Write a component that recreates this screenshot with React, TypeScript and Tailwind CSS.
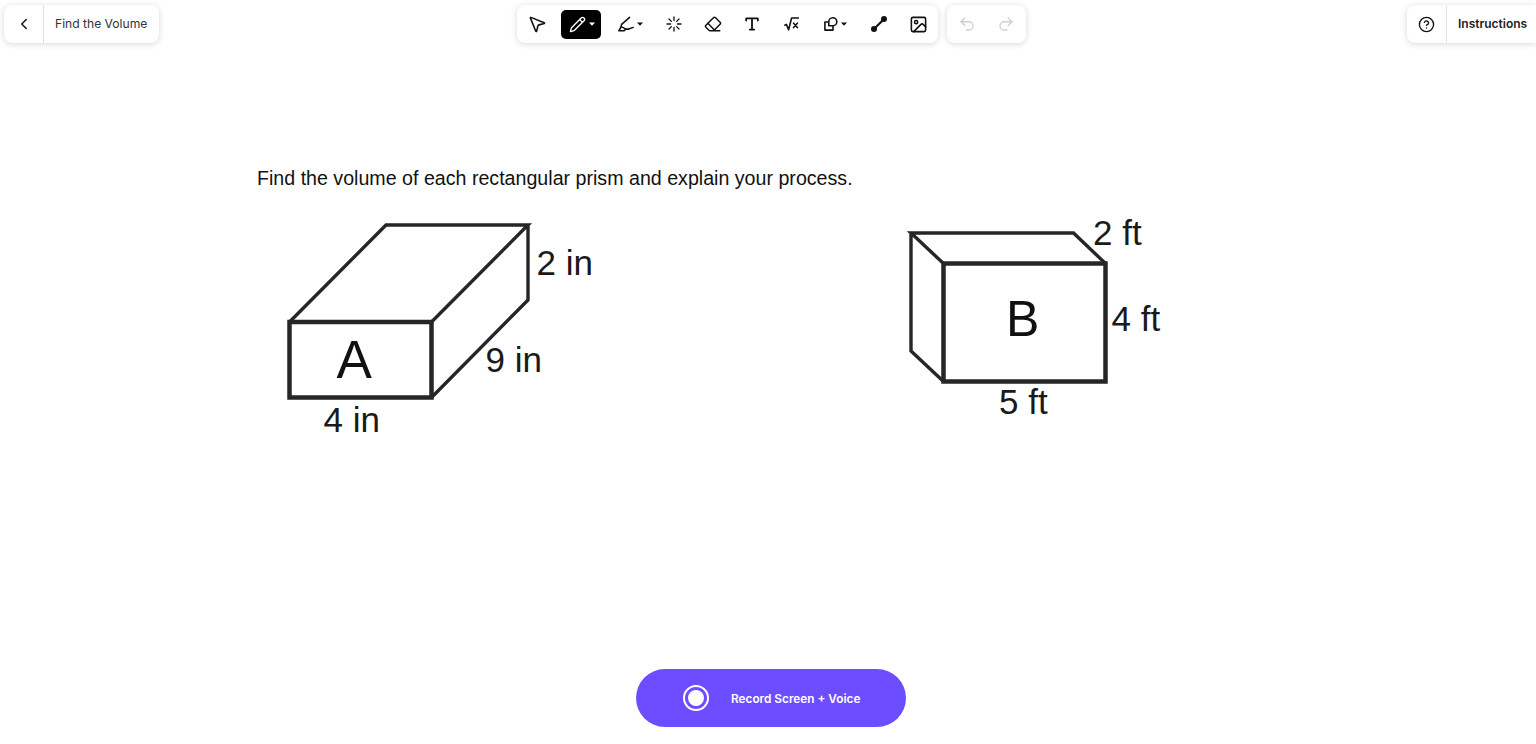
import React from "react";
import { ChevronLeft, CircleHelp, Eraser, Image as ImageIcon, MousePointer2, Pencil, Redo2, Undo2 } from "lucide-react";

const Caret = ({ white = false }: { white?: boolean }) => (
  <svg width="6" height="4" viewBox="0 0 6 4" className="ml-[3px] shrink-0">
    <path d="M0 0.5h6L3 3.8z" fill={white ? "#fff" : "#111"} />
  </svg>
);

const Highlighter = () => (
  <svg width="16" height="16" viewBox="0 0 16 16" fill="none" stroke="#111" strokeWidth="1.5" strokeLinejoin="round" strokeLinecap="round">
    <path d="M3.6 8.4 11.6 1.4" />
    <path d="M3.6 8.4 3 11 0.8 14.8H6.2L7.8 13 10 13.2" />
    <path d="M3.2 10.6 7.6 12.8" />
    <path d="M10 13.2 15.2 11.4" />
  </svg>
);

const Sparkle = () => (
  <svg width="16" height="16" viewBox="0 0 16 16" fill="none" stroke="#111" strokeWidth="1.3" strokeLinecap="round">
    <path d="M8 1v3.6M8 11.4V15M1 8h3.6M11.4 8H15M3 3l2.4 2.4M10.6 10.6 13 13M13 3l-2.4 2.4M5.4 10.6 3 13" />
  </svg>
);

const SerifT = () => (
  <svg width="14" height="14" viewBox="0 0 14 14" fill="none" stroke="#111" strokeWidth="1.8" strokeLinecap="round" strokeLinejoin="round">
    <path d="M1.2 3.6V1.4h11.6v2.2M7 1.4v11.2M4.8 12.6h4.4" />
  </svg>
);

const Sqrt = () => (
  <svg width="15" height="14" viewBox="0 0 15 14" fill="none" stroke="#111" strokeLinecap="round" strokeLinejoin="round">
    <path d="M0.8 8.2 2.4 7.4 4.6 12.8 7.6 1H14.4" strokeWidth="1.6" />
    <path d="M9.6 6.2l3.8 4.4M13.4 6.2l-3.8 4.4" strokeWidth="1.6" />
  </svg>
);

const Shapes = () => (
  <svg width="14" height="14" viewBox="0 0 14 14" fill="none" stroke="#111" strokeWidth="1.6">
    <path d="M5 5H0.9V13.1H9V8.8" strokeLinejoin="round" />
    <path d="M4.8 8.8V4.9A4 4 0 1 1 9 8.8Z" strokeLinejoin="round" />
  </svg>
);

const Connector = () => (
  <svg width="16" height="16" viewBox="0 0 16 16" fill="#111" stroke="#111">
    <path d="M3 13 13 3" strokeWidth="2.2" />
    <circle cx="3" cy="13" r="3" stroke="none" />
    <circle cx="13" cy="3" r="3" stroke="none" />
  </svg>
);

const ToolButton = ({ className = "", children }: { className?: string; children: React.ReactNode }) => (
  <div className={`flex h-[38px] items-center justify-center ${className}`}>{children}</div>
);

const Card = ({ className = "", children }: { className?: string; children: React.ReactNode }) => (
  <div className={`flex h-[38px] shrink-0 items-center bg-white shadow-[0_1px_6px_rgba(0,0,0,0.16)] ${className}`}>{children}</div>
);

const PrismA = () => (
  <svg width="330" height="225" viewBox="280 215 330 225" className="mt-[10px] block shrink-0">
    <g fill="none" stroke="#262626" strokeLinejoin="miter">
      <rect x="289.5" y="322" width="142" height="75.5" strokeWidth="4.5" />
      <path d="M289.5 322 386 225H528L431.5 322M528 225V300L431.5 397.5" strokeWidth="3.4" />
    </g>
    <g fill="#1a1a1a" className="font-['Liberation_Sans',Arial,sans-serif]">
      <text x="336.5" y="377.5" fontSize="53" fill="#111">A</text>
      <text x="536.5" y="275" fontSize="35">2 in</text>
      <text x="485.5" y="372" fontSize="35">9 in</text>
      <text x="323.5" y="432" fontSize="35">4 in</text>
    </g>
  </svg>
);

const PrismB = () => (
  <svg width="290" height="235" viewBox="900 205 290 235" className="ml-[290px] block shrink-0">
    <g fill="none" stroke="#262626" strokeLinejoin="miter">
      <rect x="943.5" y="263.5" width="162" height="118" strokeWidth="4.5" />
      <path d="M943.5 263.5 911 233H1073.5L1105.5 263.5M911 233V351L943.5 381.5" strokeWidth="3.4" />
    </g>
    <g fill="#1a1a1a" className="font-['Liberation_Sans',Arial,sans-serif]">
      <text x="1006" y="336" fontSize="50" fill="#111">B</text>
      <text x="1093" y="245" fontSize="35">2 ft</text>
      <text x="1111.5" y="331" fontSize="35">4 ft</text>
      <text x="999" y="414" fontSize="35">5 ft</text>
    </g>
  </svg>
);

export default function App() {
  return (
    <div className="flex h-[744px] w-full flex-col overflow-hidden bg-white font-['Inter',sans-serif] text-[#111]">
      <header className="flex pl-1 pt-[5px]">
        <Card className="w-[155px] rounded-lg">
          <ToolButton className="w-[40px] border-r border-[#e2e2e2]">
            <ChevronLeft size={18} strokeWidth={2} />
          </ToolButton>
          <span className="pl-[11px] text-[12.1px] text-[#333]">Find the Volume</span>
        </Card>

        <Card className="ml-[358px] w-[421px] rounded-lg">
          <ToolButton className="w-[40px]"><MousePointer2 size={20} strokeWidth={1.9} /></ToolButton>
          <ToolButton className="ml-1 mr-[6px] w-[40px]">
            <div className="flex h-[29px] w-[40px] items-center justify-center rounded-[5px] bg-black pl-[1px]">
              <Pencil size={17} color="#fff" strokeWidth={1.9} />
              <Caret white />
            </div>
          </ToolButton>
          <ToolButton className="w-[47px]"><Highlighter /><Caret /></ToolButton>
          <ToolButton className="w-[39.3px]"><Sparkle /></ToolButton>
          <ToolButton className="w-[39.3px]"><Eraser size={18} strokeWidth={2} /></ToolButton>
          <ToolButton className="w-[39.3px]"><SerifT /></ToolButton>
          <ToolButton className="w-[39.3px]"><Sqrt /></ToolButton>
          <ToolButton className="w-[48px]"><Shapes /><Caret /></ToolButton>
          <ToolButton className="w-[39.3px]"><Connector /></ToolButton>
          <ToolButton className="w-[39.3px]"><ImageIcon size={19} strokeWidth={2} /></ToolButton>
        </Card>

        <Card className="ml-[9px] w-[79px] rounded-lg">
          <ToolButton className="w-[39.5px]"><Undo2 size={18} color="#cfcfcf" strokeWidth={1.8} /></ToolButton>
          <ToolButton className="w-[39.5px]"><Redo2 size={18} color="#cfcfcf" strokeWidth={1.8} /></ToolButton>
        </Card>

        <Card className="ml-auto w-[129px] rounded-l-lg">
          <ToolButton className="w-[40px] border-r border-[#e2e2e2]"><CircleHelp size={17} strokeWidth={1.9} /></ToolButton>
          <span className="pl-[11px] text-[12px] font-semibold text-[#222]">Instructions</span>
        </Card>
      </header>

      <p className="ml-[257px] mt-[121px] font-['Liberation_Sans',Arial,sans-serif] text-[19.64px] leading-7 text-[#111]">
        Find the volume of each rectangular prism and explain your process.
      </p>

      <div className="ml-[280px] mt-[13px] flex items-start">
        <PrismA />
        <PrismB />
      </div>

      <button className="mb-[17px] ml-[636px] mt-auto flex h-[58px] w-[270px] shrink-0 items-center rounded-full bg-[#6c4dff] pl-[47px] text-white">
        <span className="flex h-[26px] w-[26px] items-center justify-center rounded-full border-2 border-white">
          <span className="h-[16px] w-[16px] rounded-full bg-white" />
        </span>
        <span className="ml-[22px] pt-[3px] text-[11.8px] font-semibold">Record Screen + Voice</span>
      </button>
    </div>
  );
}
